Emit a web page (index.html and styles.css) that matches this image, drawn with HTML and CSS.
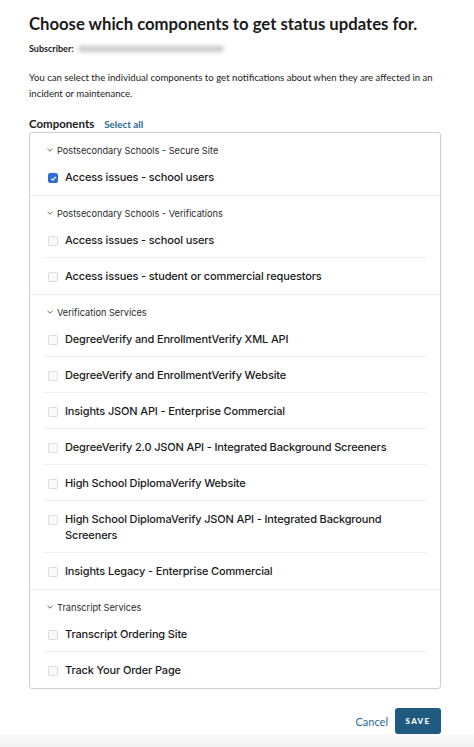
FILE: index.html
```html
<!DOCTYPE html>
<html lang="en">
  <head>
    <meta charset="UTF-8" />
    <title>Component subscriptions</title>
    <link rel="stylesheet" href="styles.css">
  </head>
  <body>
    <div class="modal">
      <h1>Choose which components to get status updates for.</h1>
      <div class="subscriber">
        <b>Subscriber:</b>
        <span class="blurred"></span>
      </div>
      <p class="intro">
        You can select the individual components to get notifications about when they are affected in an
        incident or maintenance.
      </p>

      <div class="components-head">
        <span class="label">Components</span>
        <a href="#" class="select-all">Select all</a>
      </div>

      <div class="components">
        <div class="group">
          <div class="group-name">
            <svg class="chevron" width="6" height="4" viewBox="0 0 6 4"><path d="M0.5 0.8 L3 3.2 L5.5 0.8" fill="none" stroke="#555" stroke-width="0.9"/></svg>
            Postsecondary Schools - Secure Site
          </div>
          <label class="item"><span class="box checked"><svg width="9" height="9" viewBox="0 0 9 9"><path d="M2.2 4.6 L3.8 6.1 L6.8 2.9" fill="none" stroke="#fff" stroke-width="1.3"/></svg></span><span class="text">Access issues - school users</span></label>
        </div>

        <div class="group">
          <div class="group-name">
            <svg class="chevron" width="6" height="4" viewBox="0 0 6 4"><path d="M0.5 0.8 L3 3.2 L5.5 0.8" fill="none" stroke="#555" stroke-width="0.9"/></svg>
            Postsecondary Schools - Verifications
          </div>
          <label class="item"><span class="box"></span><span class="text">Access issues - school users</span></label>
          <label class="item"><span class="box"></span><span class="text">Access issues - student or commercial requestors</span></label>
        </div>

        <div class="group">
          <div class="group-name">
            <svg class="chevron" width="6" height="4" viewBox="0 0 6 4"><path d="M0.5 0.8 L3 3.2 L5.5 0.8" fill="none" stroke="#555" stroke-width="0.9"/></svg>
            Verification Services
          </div>
          <label class="item"><span class="box"></span><span class="text">DegreeVerify and EnrollmentVerify XML API</span></label>
          <label class="item"><span class="box"></span><span class="text">DegreeVerify and EnrollmentVerify Website</span></label>
          <label class="item"><span class="box"></span><span class="text">Insights JSON API - Enterprise Commercial</span></label>
          <label class="item"><span class="box"></span><span class="text">DegreeVerify 2.0 JSON API - Integrated Background Screeners</span></label>
          <label class="item"><span class="box"></span><span class="text">High School DiplomaVerify Website</span></label>
          <label class="item"><span class="box"></span><span class="text">High School DiplomaVerify JSON API - Integrated Background Screeners</span></label>
          <label class="item"><span class="box"></span><span class="text">Insights Legacy - Enterprise Commercial</span></label>
        </div>

        <div class="group">
          <div class="group-name">
            <svg class="chevron" width="6" height="4" viewBox="0 0 6 4"><path d="M0.5 0.8 L3 3.2 L5.5 0.8" fill="none" stroke="#555" stroke-width="0.9"/></svg>
            Transcript Services
          </div>
          <label class="item"><span class="box"></span><span class="text">Transcript Ordering Site</span></label>
          <label class="item"><span class="box"></span><span class="text">Track Your Order Page</span></label>
        </div>
      </div>

      <div class="actions">
        <a href="#" class="cancel">Cancel</a>
        <button class="save">SAVE</button>
      </div>
    </div>
    <div class="modal-edge"></div>
  </body>
</html>
```

FILE: styles.css
```css
body {
  margin: 0;
  font-family: Lato, "Open Sans", sans-serif;
  color: #1a1a1a;
  background: #fff;
}
.modal {
  padding: 12px 33px 0 29px;
}
h1 {
  margin: 0;
  font-size: 16.7px;
  font-weight: 700;
  line-height: 24px;
  white-space: nowrap;
}
.subscriber {
  margin-top: 6px;
  font-size: 9px;
  line-height: 14px;
  display: flex;
  align-items: center;
  gap: 4px;
}
.blurred {
  display: inline-block;
  width: 146px;
  height: 6px;
  background: #c9c9c9;
  border-radius: 3px;
  filter: blur(2px);
}
.intro {
  margin: 14px 0 0;
  font-size: 9.6px;
  line-height: 16px;
  color: #222;
}
.components-head {
  margin-top: 15px;
  display: flex;
  align-items: baseline;
  gap: 10px;
}
.label {
  font-size: 11.5px;
  font-weight: 700;
}
.select-all {
  font-size: 9.8px;
  color: #2c6a92;
  text-decoration: none;
  font-weight: 700;
}
.components {
  margin-top: 2px;
  border: 1px solid #cfcfcf;
  border-radius: 3px;
  box-shadow: 0 0 1px rgba(0, 0, 0, 0.08);
  font-family: Inter, "Open Sans", sans-serif;
}
.group {
  padding: 0 13px 1px;
  border-bottom: 1px solid #ececec;
}
.group:last-child {
  border-bottom: none;
}
.group-name {
  display: flex;
  align-items: center;
  gap: 4px;
  padding: 10px 0 0 4px;
  margin-bottom: 2px;
  height: 14px;
  font-size: 9.2px;
  color: #2a2a2a;
}
.item {
  display: flex;
  align-items: flex-start;
  gap: 7px;
  padding: 10px 0 9px 5px;
  border-bottom: 1px solid #f0f0f0;
  font-size: 11px;
  letter-spacing: -0.15px;
  font-weight: 500;
  line-height: 16px;
  color: #1a1a1a;
}
.group .item:last-child {
  border-bottom: none;
}
.box {
  flex: none;
  width: 8px;
  height: 8px;
  margin-top: 4px;
  border: 1px solid #dcdcdc;
  border-radius: 2px;
  background: #fafafa;
  display: flex;
  align-items: center;
  justify-content: center;
}
.box.checked {
  background: #2f6fd1;
  border-color: #2f6fd1;
}
.box svg {
  flex: none;
}
.actions {
  display: flex;
  justify-content: flex-end;
  align-items: center;
  gap: 7px;
  margin-top: 19px;
}
.cancel {
  color: #2c6a92;
  font-size: 11px;
  text-decoration: none;
}
.save {
  background: #1f5a80;
  color: #fff;
  border: none;
  border-radius: 3px;
  width: 46px;
  height: 26px;
  font-family: Lato, sans-serif;
  font-weight: 900;
  font-size: 8px;
  letter-spacing: 1.3px;
}
.modal-edge {
  height: 14px;
  background: linear-gradient(#fafafa, #f1f1f1);
}
```
